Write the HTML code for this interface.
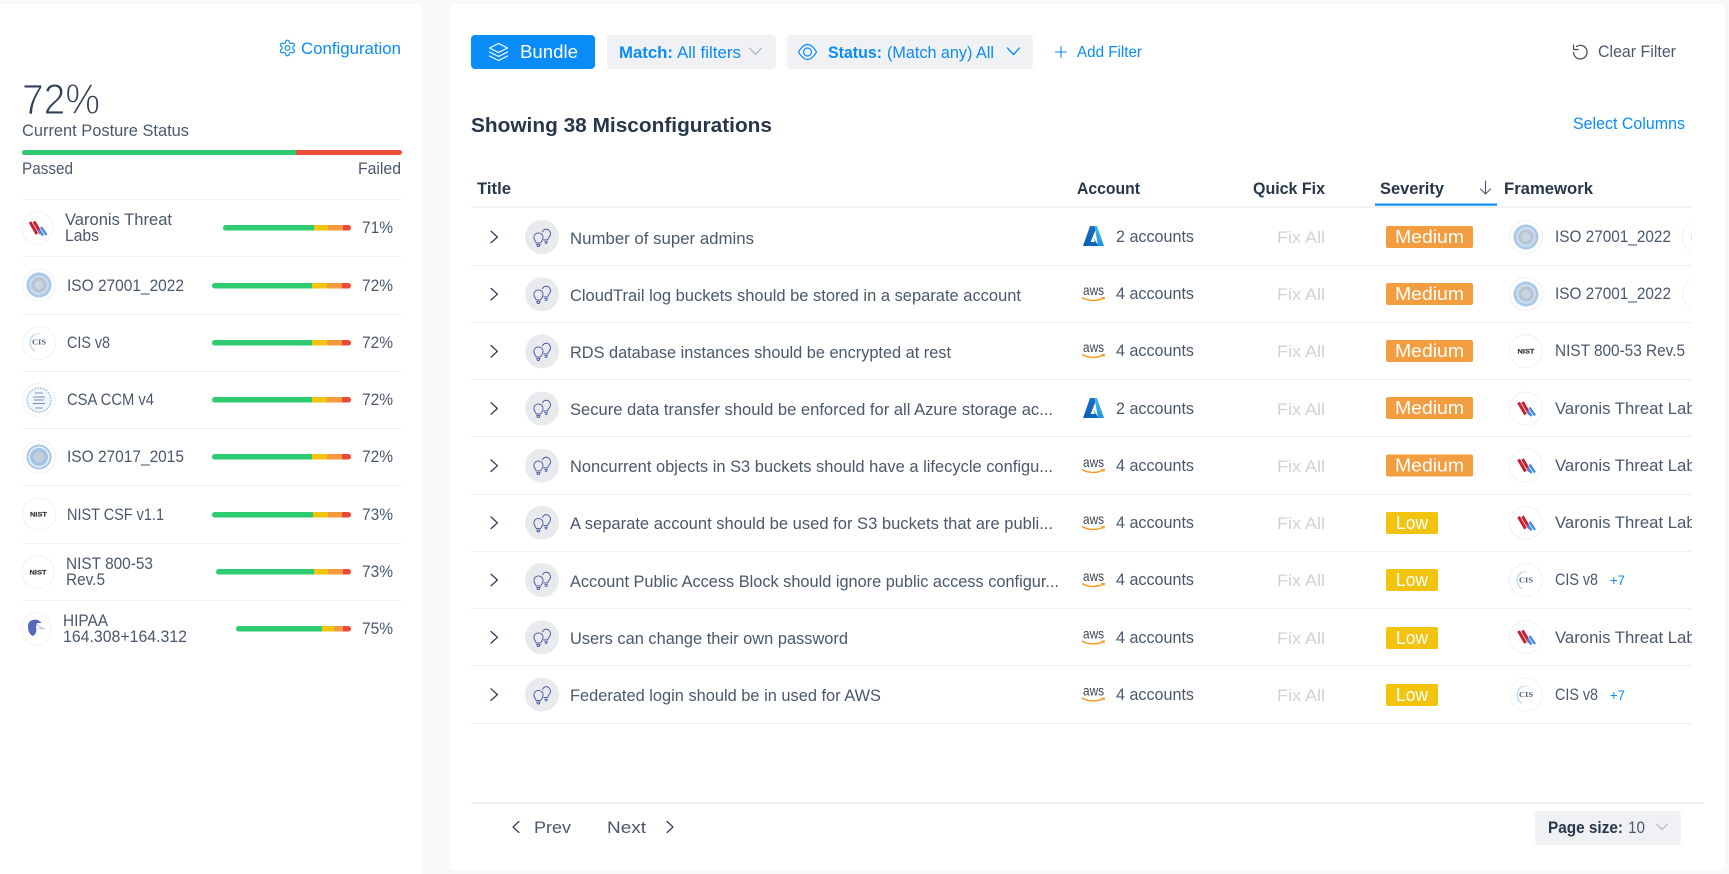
<!DOCTYPE html>
<html lang="en">
<head>
<meta charset="utf-8">
<title>Misconfigurations</title>
<style>
html,body{margin:0;padding:0;width:1729px;height:874px;overflow:hidden;background:#fafafa}
svg{display:block;font-family:"Liberation Sans",Arial,sans-serif}
.t{font-size:17px;fill:#4a586c}
.b{font-size:16.5px;fill:#27364a;font-weight:700}
.l{font-size:17px;fill:#0a8cf5}
.f{font-size:17px;fill:#cfd2d6}
.w{font-size:18px;fill:#fff}
.sep{stroke:#f0f0f2;stroke-width:1}
.c{fill:#fff;stroke:#f0f1f4;stroke-width:1}
.n{fill:none;stroke-linecap:round;stroke-linejoin:round}
</style>
</head>
<body>
<svg width="1729" height="874" viewBox="0 0 1729 874" xmlns="http://www.w3.org/2000/svg">
<defs>
<clipPath id="cl"><rect x="471" y="140" width="1221" height="600"/></clipPath>
<linearGradient id="az1" x1="0" y1="0" x2="0" y2="1"><stop offset="0" stop-color="#1a6fc4"/><stop offset="1" stop-color="#0a5fb4"/></linearGradient>
<linearGradient id="az2" x1="0" y1="0" x2="0" y2="1"><stop offset="0" stop-color="#3cc0f0"/><stop offset="1" stop-color="#2490dc"/></linearGradient>
<g id="var">
<path d="M-7.5-6-.5 6M-3.5-6.500 3.500 5.500" stroke="#c9202f" stroke-width="3" fill="none"/>
<path d="M3.500-1 9 7M1.500 2 5.500 7.500" stroke="#3f8ae6" stroke-width="2.400" fill="none"/>
</g>
<g id="iso">
<circle r="12.500" fill="#a9c8e8"/><circle r="10" fill="#c9daec"/><circle r="7.500" fill="#b5c5d6"/><circle r="4.500" fill="#cdd5de"/>
</g>
<g id="iso2">
<circle r="12.500" fill="#a5c6ea"/><circle r="10.500" fill="#e8f1fa"/><circle r="9" fill="#a4c3e4"/><circle r="5.500" fill="#c3cfdb"/>
</g>
<g id="csa">
<circle r="12" fill="#f0f5fa"/><circle r="12" fill="none" stroke="#9dbbe0" stroke-width="1.200" stroke-dasharray="2 1"/><path d="M-6-3H6M-5 0H5M-6 3.500H6" stroke="#6d8cc0" stroke-width="1"/><path d="M-4-7H4M-4 8H4" stroke="#8eaad4" stroke-width="1.200"/>
</g>
<g id="nist">
<text x="-8.500" y="2.500" font-size="6.500" font-weight="700" fill="#35393f" stroke="#35393f" stroke-width=".2" textLength="17" lengthAdjust="spacingAndGlyphs">NIST</text>
</g>
<g id="cis">
<path d="M-4-8A10 10 0 0 0-4 9" fill="none" stroke="#b9dcef" stroke-width="1.400"/><path d="M-7-4A9 9 0 0 1 1-8.500" fill="none" stroke="#d3e8f4" stroke-width="1.200"/>
<text x="-7" y="2.500" font-family="Liberation Serif,serif" font-size="7" font-weight="700" fill="#4d6272" textLength="14" lengthAdjust="spacingAndGlyphs">CIS</text>
</g>
<g id="hip">
<path d="M-9-2C-9-8-3-9 1-8L5-5 0-5-1-1C0 3-1 6-4 8-8 6-9 3-9-2Z" fill="#5568b8"/><path d="M0-3 7 1M1 0 8 1" stroke="#b6c0e0" stroke-width="1"/>
</g>
<g id="bulb" class="n" stroke="#3c4f9c" stroke-width="1" transform="scale(.88)">
<path d="M-1.600 5.600C-.6 3.600 1.200 2.600 1.200 -.6A5.200 5.200 0 0 0-9.200-.6C-9.200 2.400-7.200 3.600-6.600 5.600Z" fill="#e9eaed"/>
<path d="M-6 7.500H-2.200L-3.200 9.600H-5.200Z"/>
<path d="M.6-7C1.400-9 3.200-10 5-10A5.200 5.200 0 0 1 8.800-2C7.600-.4 7-.2 6.400 2.200H2M3 4.200H6L5.200 6H3.600"/>
</g>
<g id="chevR" class="n"><path d="M-3-5.800 3.400 0-3 5.800" stroke="#2f3e55" stroke-width="1.300"/></g>
<g id="aws">
<text x="-10.500" y="2" font-size="14" fill="#3a4450" textLength="21" lengthAdjust="spacingAndGlyphs">aws</text>
<path d="M-11.500 4.500C-5 8.300 4 8.300 10 5" fill="none" stroke="#f7981d" stroke-width="1.400"/><path d="M7.800 4.500 11 4.600 10.200 7" fill="none" stroke="#f7981d" stroke-width="1"/>
</g>
<g id="azure">
<path d="M-3.500-10H3.500L-4.500 10H-10.500Z" fill="url(#az1)"/>
<path d="M1-10H3.500L10.500 10H4.500Z" fill="url(#az2)"/>
<path d="M-.5 1 5 10H-8L-3 6H1.500Z" fill="#0a66bf"/>
</g>
</defs>

<!-- panels -->
<rect x="-4" y="3" width="428" height="875" rx="5" fill="#fff" stroke="#f3f3f4"/>
<rect x="448" y="3" width="1278" height="869" rx="5" fill="#fff" stroke="#f2f2f3"/>

<!-- left header -->
<g transform="translate(278.100 38.600) scale(.78)"><path class="n" stroke="#0a8cf5" stroke-width="1.500" d="M12.220 2h-.44a2 2 0 0 0-2 2v.18a2 2 0 0 1-1 1.730l-.43.25a2 2 0 0 1-2 0l-.15-.08a2 2 0 0 0-2.730.73l-.22.38a2 2 0 0 0 .73 2.730l.15.1a2 2 0 0 1 1 1.720v.51a2 2 0 0 1-1 1.740l-.15.09a2 2 0 0 0-.73 2.730l.22.38a2 2 0 0 0 2.730.73l.15-.08a2 2 0 0 1 2 0l.43.25a2 2 0 0 1 1 1.730V20a2 2 0 0 0 2 2h.44a2 2 0 0 0 2-2v-.18a2 2 0 0 1 1-1.730l.43-.25a2 2 0 0 1 2 0l.15.08a2 2 0 0 0 2.730-.73l.22-.39a2 2 0 0 0-.73-2.730l-.15-.08a2 2 0 0 1-1-1.740v-.5a2 2 0 0 1 1-1.740l.15-.09a2 2 0 0 0 .73-2.730l-.22-.38a2 2 0 0 0-2.730-.73l-.15.08a2 2 0 0 1-2 0l-.43-.25a2 2 0 0 1-1-1.730V4a2 2 0 0 0-2-2z"/><circle cx="12" cy="12" r="3" class="n" stroke="#0a8cf5" stroke-width="1.500"/></g>
<text class="l" x="301" y="54" textLength="100" lengthAdjust="spacingAndGlyphs">Configuration</text>
<text x="22" y="114" font-size="43" fill="#2f3e55" stroke="#fff" stroke-width="1.100" textLength="78" lengthAdjust="spacingAndGlyphs">72%</text>
<text class="t" x="22" y="136" textLength="167" lengthAdjust="spacingAndGlyphs">Current Posture Status</text>
<rect x="22" y="150" width="380" height="5" rx="2.500" fill="#e94f3b"/>
<path d="M24.500 150H296V155H24.500A2.500 2.500 0 0 1 24.500 150Z" fill="#2ecb71"/>
<text class="t" x="22" y="174" textLength="51" lengthAdjust="spacingAndGlyphs">Passed</text>
<text class="t" x="358" y="174" textLength="43" lengthAdjust="spacingAndGlyphs">Failed</text>

<!-- left list separators -->
<g class="sep">
<line x1="22" x2="401" y1="199.500" y2="199.500"/><line x1="22" x2="401" y1="256.500" y2="256.500"/><line x1="22" x2="401" y1="314.500" y2="314.500"/><line x1="22" x2="401" y1="371.500" y2="371.500"/><line x1="22" x2="401" y1="428.500" y2="428.500"/><line x1="22" x2="401" y1="485.500" y2="485.500"/><line x1="22" x2="401" y1="543.500" y2="543.500"/><line x1="22" x2="401" y1="600.500" y2="600.500"/>
</g>

<!-- list row 1 -->
<ellipse class="c" cx="37.500" cy="228" rx="15.500" ry="16.500"/><use href="#var" x="37.500" y="228"/>
<text class="t" x="65" y="225" textLength="107" lengthAdjust="spacingAndGlyphs">Varonis Threat</text>
<text class="t" x="65" y="241" textLength="34" lengthAdjust="spacingAndGlyphs">Labs</text>
<rect x="223" y="225" width="94" height="5.500" rx="2.700" fill="#2ecb71"/><rect x="340" y="225" width="11" height="5.500" rx="2.700" fill="#eb4a3a"/><rect x="314" y="225" width="14" height="5.500" fill="#f2c40f"/><rect x="328" y="225" width="15" height="5.500" fill="#f39a3e"/>
<text class="t" x="362" y="233" textLength="31" lengthAdjust="spacingAndGlyphs">71%</text>

<!-- list row 2 -->
<ellipse class="c" cx="39" cy="285" rx="16.500" ry="16"/><use href="#iso" x="39" y="285"/>
<text class="t" x="67" y="291" textLength="117" lengthAdjust="spacingAndGlyphs">ISO 27001_2022</text>
<rect x="212" y="283" width="103" height="5.500" rx="2.700" fill="#2ecb71"/><rect x="339" y="283" width="12" height="5.500" rx="2.700" fill="#eb4a3a"/><rect x="312" y="283" width="15" height="5.500" fill="#f2c40f"/><rect x="327" y="283" width="15" height="5.500" fill="#f39a3e"/>
<text class="t" x="362" y="291" textLength="31" lengthAdjust="spacingAndGlyphs">72%</text>

<!-- list row 3 -->
<ellipse class="c" cx="39" cy="343" rx="16.500" ry="16.500"/><use href="#cis" x="39" y="342"/>
<text class="t" x="67" y="348" textLength="43" lengthAdjust="spacingAndGlyphs">CIS v8</text>
<rect x="212" y="340" width="103" height="5.500" rx="2.700" fill="#2ecb71"/><rect x="339" y="340" width="12" height="5.500" rx="2.700" fill="#eb4a3a"/><rect x="312" y="340" width="15" height="5.500" fill="#f2c40f"/><rect x="327" y="340" width="15" height="5.500" fill="#f39a3e"/>
<text class="t" x="362" y="348" textLength="31" lengthAdjust="spacingAndGlyphs">72%</text>

<!-- list row 4 -->
<ellipse class="c" cx="39" cy="400" rx="16.500" ry="16.500"/><use href="#csa" x="39" y="400"/>
<text class="t" x="67" y="405" textLength="87" lengthAdjust="spacingAndGlyphs">CSA CCM v4</text>
<rect x="212" y="397" width="103" height="5.500" rx="2.700" fill="#2ecb71"/><rect x="339" y="397" width="12" height="5.500" rx="2.700" fill="#eb4a3a"/><rect x="312" y="397" width="15" height="5.500" fill="#f2c40f"/><rect x="327" y="397" width="15" height="5.500" fill="#f39a3e"/>
<text class="t" x="362" y="405" textLength="31" lengthAdjust="spacingAndGlyphs">72%</text>

<!-- list row 5 -->
<ellipse class="c" cx="39" cy="457" rx="16.500" ry="16.500"/><use href="#iso2" x="39" y="457"/>
<text class="t" x="67" y="462" textLength="117" lengthAdjust="spacingAndGlyphs">ISO 27017_2015</text>
<rect x="212" y="454" width="103" height="5.500" rx="2.700" fill="#2ecb71"/><rect x="339" y="454" width="12" height="5.500" rx="2.700" fill="#eb4a3a"/><rect x="312" y="454" width="15" height="5.500" fill="#f2c40f"/><rect x="327" y="454" width="15" height="5.500" fill="#f39a3e"/>
<text class="t" x="362" y="462" textLength="31" lengthAdjust="spacingAndGlyphs">72%</text>

<!-- list row 6 -->
<ellipse class="c" cx="39" cy="514" rx="16.500" ry="16"/><use href="#nist" x="38.500" y="514"/>
<text class="t" x="67" y="520" textLength="97" lengthAdjust="spacingAndGlyphs">NIST CSF v1.1</text>
<rect x="212" y="512" width="104" height="5.500" rx="2.700" fill="#2ecb71"/><rect x="339" y="512" width="12" height="5.500" rx="2.700" fill="#eb4a3a"/><rect x="313" y="512" width="15" height="5.500" fill="#f2c40f"/><rect x="328" y="512" width="14" height="5.500" fill="#f39a3e"/>
<text class="t" x="362" y="520" textLength="31" lengthAdjust="spacingAndGlyphs">73%</text>

<!-- list row 7 -->
<ellipse class="c" cx="38" cy="572" rx="16" ry="16.500"/><use href="#nist" x="38" y="572"/>
<text class="t" x="66" y="569" textLength="87" lengthAdjust="spacingAndGlyphs">NIST 800-53</text>
<text class="t" x="66" y="585" textLength="39" lengthAdjust="spacingAndGlyphs">Rev.5</text>
<rect x="216" y="569" width="101" height="5.500" rx="2.700" fill="#2ecb71"/><rect x="340" y="569" width="11" height="5.500" rx="2.700" fill="#eb4a3a"/><rect x="314" y="569" width="14" height="5.500" fill="#f2c40f"/><rect x="328" y="569" width="15" height="5.500" fill="#f39a3e"/>
<text class="t" x="362" y="577" textLength="31" lengthAdjust="spacingAndGlyphs">73%</text>

<!-- list row 8 -->
<ellipse class="c" cx="36.500" cy="629" rx="14.500" ry="16.500"/><use href="#hip" x="37" y="628"/>
<text class="t" x="63" y="626" textLength="45" lengthAdjust="spacingAndGlyphs">HIPAA</text>
<text class="t" x="63" y="642" textLength="124" lengthAdjust="spacingAndGlyphs">164.308+164.312</text>
<rect x="236" y="626" width="89" height="5.500" rx="2.700" fill="#2ecb71"/><rect x="340" y="626" width="11" height="5.500" rx="2.700" fill="#eb4a3a"/><rect x="322" y="626" width="12" height="5.500" fill="#f2c40f"/><rect x="334" y="626" width="9" height="5.500" fill="#f39a3e"/>
<text class="t" x="362" y="634" textLength="31" lengthAdjust="spacingAndGlyphs">75%</text>

<!-- toolbar -->
<rect x="471" y="35" width="124" height="34" rx="4" fill="#0a8cf8"/>
<g transform="translate(489 43)" class="n" stroke="#fff" stroke-width="1.200"><path d="M9.500 .5 18.500 5 9.500 9.500 .5 5Z"/><path d="M.5 9 9.500 13.500 18.500 9"/><path d="M.5 13 9.500 17.500 18.500 13"/></g>
<text x="520" y="58" font-size="18" fill="#fff" textLength="58" lengthAdjust="spacingAndGlyphs">Bundle</text>

<rect x="607" y="35" width="169" height="34" rx="4" fill="#f0f1f5"/>
<text x="619" y="58" font-size="17" font-weight="700" fill="#0a8cf5" textLength="54" lengthAdjust="spacingAndGlyphs">Match:</text>
<text class="l" x="677" y="58" textLength="64" lengthAdjust="spacingAndGlyphs">All filters</text>
<path class="n" d="M749.500 48 755.500 54.500 761.500 48" stroke="#a9b0ba" stroke-width="1.100"/>

<rect x="787" y="35" width="246" height="34" rx="4" fill="#f0f1f5"/>
<g class="n" stroke="#0a8cf5" stroke-width="1.200"><path d="M798.500 52C802 46 805 44.500 807.500 44.500S813 46 816.500 52C813 58 810 59.500 807.500 59.500S802 58 798.500 52Z"/><circle cx="807.500" cy="52" r="4"/></g>
<text x="828" y="58" font-size="17" font-weight="700" fill="#0a8cf5" textLength="54" lengthAdjust="spacingAndGlyphs">Status:</text>
<text class="l" x="887" y="58" textLength="107" lengthAdjust="spacingAndGlyphs">(Match any) All</text>
<path class="n" d="M1007.500 48 1013.500 54.500 1019.500 48" stroke="#0a8cf5" stroke-width="1.300"/>

<path class="n" d="M1061 46.500V57.500M1055.500 52H1066.500" stroke="#0a8cf5" stroke-width="1.100"/>
<text x="1077" y="57" font-size="15.500" fill="#0a8cf5" textLength="65" lengthAdjust="spacingAndGlyphs">Add Filter</text>

<g class="n" stroke="#3f4b5c" stroke-width="1.200"><path d="M1576.500 46.500A6.800 6.800 0 1 1 1573.500 52.500"/><path d="M1573.500 45V49.500H1578"/></g>
<text class="t" x="1598" y="57" textLength="78" lengthAdjust="spacingAndGlyphs">Clear Filter</text>

<text x="471" y="132" font-size="20" font-weight="700" fill="#27364a" textLength="301" lengthAdjust="spacingAndGlyphs">Showing 38 Misconfigurations</text>
<text class="l" x="1573" y="129" textLength="112" lengthAdjust="spacingAndGlyphs">Select Columns</text>

<!-- table header -->
<text class="b" x="477" y="194" textLength="34" lengthAdjust="spacingAndGlyphs">Title</text>
<text class="b" x="1077" y="194" textLength="63" lengthAdjust="spacingAndGlyphs">Account</text>
<text class="b" x="1253" y="194" textLength="72" lengthAdjust="spacingAndGlyphs">Quick Fix</text>
<text class="b" x="1380" y="194" textLength="64" lengthAdjust="spacingAndGlyphs">Severity</text>
<path class="n" d="M1485.500 181V194M1480.500 189 1485.500 194 1490.500 189" stroke="#4a586c" stroke-width="1.100"/>
<text class="b" x="1504" y="194" textLength="89" lengthAdjust="spacingAndGlyphs">Framework</text>
<rect x="471" y="206" width="1221" height="2" fill="#f2f2f4"/>
<rect x="1375" y="203.500" width="122" height="2.200" fill="#0a8cf5"/>

<g clip-path="url(#cl)">
<!-- separators -->
<g class="sep"><line x1="471" x2="1692" y1="265.500" y2="265.500"/><line x1="471" x2="1692" y1="322.500" y2="322.500"/><line x1="471" x2="1692" y1="379.500" y2="379.500"/><line x1="471" x2="1692" y1="436.500" y2="436.500"/><line x1="471" x2="1692" y1="494.500" y2="494.500"/><line x1="471" x2="1692" y1="551.500" y2="551.500"/><line x1="471" x2="1692" y1="608.500" y2="608.500"/><line x1="471" x2="1692" y1="665.500" y2="665.500"/><line x1="471" x2="1692" y1="723.500" y2="723.500"/></g>

<!-- row 1 -->
<use href="#chevR" x="494" y="237"/><circle cx="542" cy="237" r="17" fill="#e9eaed"/><use href="#bulb" x="542" y="238"/>
<text class="t" x="570" y="244" textLength="184" lengthAdjust="spacingAndGlyphs">Number of super admins</text>
<use href="#azure" x="1093.500" y="236"/><text class="t" x="1116" y="242" textLength="78" lengthAdjust="spacingAndGlyphs">2 accounts</text>
<text class="f" x="1277" y="243" textLength="48" lengthAdjust="spacingAndGlyphs">Fix All</text>
<rect x="1386" y="226" width="87" height="22" rx="2" fill="#f39d41"/><text class="w" x="1395" y="243" textLength="69" lengthAdjust="spacingAndGlyphs">Medium</text>
<circle class="c" cx="1526" cy="237" r="16.500"/><use href="#iso" x="1526" y="237"/>
<text class="t" x="1555" y="242" textLength="116" lengthAdjust="spacingAndGlyphs">ISO 27001_2022</text>
<circle class="c" cx="1699" cy="237" r="16.500"/><rect x="1691" y="234" width="1" height="7" fill="#dfe2e6"/>

<!-- row 2 -->
<use href="#chevR" x="494" y="294.200"/><circle cx="542" cy="294.200" r="17" fill="#e9eaed"/><use href="#bulb" x="542" y="295"/>
<text class="t" x="570" y="301" textLength="451" lengthAdjust="spacingAndGlyphs">CloudTrail log buckets should be stored in a separate account</text>
<use href="#aws" x="1093.500" y="293"/><text class="t" x="1116" y="299" textLength="78" lengthAdjust="spacingAndGlyphs">4 accounts</text>
<text class="f" x="1277" y="300" textLength="48" lengthAdjust="spacingAndGlyphs">Fix All</text>
<rect x="1386" y="283" width="87" height="22" rx="2" fill="#f39d41"/><text class="w" x="1395" y="300" textLength="69" lengthAdjust="spacingAndGlyphs">Medium</text>
<circle class="c" cx="1526" cy="294" r="16.500"/><use href="#iso" x="1526" y="294"/>
<text class="t" x="1555" y="299" textLength="116" lengthAdjust="spacingAndGlyphs">ISO 27001_2022</text>
<circle class="c" cx="1699" cy="294" r="16.500"/>

<!-- row 3 -->
<use href="#chevR" x="494" y="351.300"/><circle cx="542" cy="351.300" r="17" fill="#e9eaed"/><use href="#bulb" x="542" y="352"/>
<text class="t" x="570" y="358" textLength="381" lengthAdjust="spacingAndGlyphs">RDS database instances should be encrypted at rest</text>
<use href="#aws" x="1093.500" y="350"/><text class="t" x="1116" y="356" textLength="78" lengthAdjust="spacingAndGlyphs">4 accounts</text>
<text class="f" x="1277" y="357" textLength="48" lengthAdjust="spacingAndGlyphs">Fix All</text>
<rect x="1386" y="340" width="87" height="22" rx="2" fill="#f39d41"/><text class="w" x="1395" y="357" textLength="69" lengthAdjust="spacingAndGlyphs">Medium</text>
<circle class="c" cx="1526" cy="351" r="16.500"/><use href="#nist" x="1526" y="351"/>
<text class="t" x="1555" y="356" textLength="130" lengthAdjust="spacingAndGlyphs">NIST 800-53 Rev.5</text>

<!-- row 4 -->
<use href="#chevR" x="494" y="408.500"/><circle cx="542" cy="408.500" r="17" fill="#e9eaed"/><use href="#bulb" x="542" y="409"/>
<text class="t" x="570" y="415" textLength="483" lengthAdjust="spacingAndGlyphs">Secure data transfer should be enforced for all Azure storage ac...</text>
<use href="#azure" x="1093.500" y="408"/><text class="t" x="1116" y="414" textLength="78" lengthAdjust="spacingAndGlyphs">2 accounts</text>
<text class="f" x="1277" y="415" textLength="48" lengthAdjust="spacingAndGlyphs">Fix All</text>
<rect x="1386" y="397" width="87" height="22" rx="2" fill="#f39d41"/><text class="w" x="1395" y="414" textLength="69" lengthAdjust="spacingAndGlyphs">Medium</text>
<circle class="c" cx="1526" cy="408.500" r="16.500"/><use href="#var" x="1526" y="408.500"/>
<text class="t" x="1555" y="414" textLength="149" lengthAdjust="spacingAndGlyphs">Varonis Threat Labs</text>

<!-- row 5 -->
<use href="#chevR" x="494" y="465.700"/><circle cx="542" cy="465.700" r="17" fill="#e9eaed"/><use href="#bulb" x="542" y="466"/>
<text class="t" x="570" y="472" textLength="483" lengthAdjust="spacingAndGlyphs">Noncurrent objects in S3 buckets should have a lifecycle configu...</text>
<use href="#aws" x="1093.500" y="465"/><text class="t" x="1116" y="471" textLength="78" lengthAdjust="spacingAndGlyphs">4 accounts</text>
<text class="f" x="1277" y="472" textLength="48" lengthAdjust="spacingAndGlyphs">Fix All</text>
<rect x="1386" y="454.500" width="87" height="22" rx="2" fill="#f39d41"/><text class="w" x="1395" y="471.500" textLength="69" lengthAdjust="spacingAndGlyphs">Medium</text>
<circle class="c" cx="1526" cy="465.500" r="16.500"/><use href="#var" x="1526" y="465.500"/>
<text class="t" x="1555" y="471" textLength="149" lengthAdjust="spacingAndGlyphs">Varonis Threat Labs</text>

<!-- row 6 -->
<use href="#chevR" x="494" y="522.800"/><circle cx="542" cy="522.800" r="17" fill="#e9eaed"/><use href="#bulb" x="542" y="523.500"/>
<text class="t" x="570" y="529" textLength="483" lengthAdjust="spacingAndGlyphs">A separate account should be used for S3 buckets that are publi...</text>
<use href="#aws" x="1093.500" y="522"/><text class="t" x="1116" y="528" textLength="78" lengthAdjust="spacingAndGlyphs">4 accounts</text>
<text class="f" x="1277" y="529" textLength="48" lengthAdjust="spacingAndGlyphs">Fix All</text>
<rect x="1386" y="512" width="52" height="22" rx="2" fill="#f2c40f"/><text class="w" x="1396" y="529" textLength="32" lengthAdjust="spacingAndGlyphs">Low</text>
<circle class="c" cx="1526" cy="522.800" r="16.500"/><use href="#var" x="1526" y="522.800"/>
<text class="t" x="1555" y="528" textLength="149" lengthAdjust="spacingAndGlyphs">Varonis Threat Labs</text>

<!-- row 7 -->
<use href="#chevR" x="494" y="580"/><circle cx="542" cy="580" r="17" fill="#e9eaed"/><use href="#bulb" x="542" y="581"/>
<text class="t" x="570" y="587" textLength="489" lengthAdjust="spacingAndGlyphs">Account Public Access Block should ignore public access configur...</text>
<use href="#aws" x="1093.500" y="579"/><text class="t" x="1116" y="585" textLength="78" lengthAdjust="spacingAndGlyphs">4 accounts</text>
<text class="f" x="1277" y="586" textLength="48" lengthAdjust="spacingAndGlyphs">Fix All</text>
<rect x="1386" y="569" width="52" height="22" rx="2" fill="#f2c40f"/><text class="w" x="1396" y="586" textLength="32" lengthAdjust="spacingAndGlyphs">Low</text>
<circle class="c" cx="1526" cy="580" r="16.500"/><use href="#cis" x="1526" y="580"/>
<text class="t" x="1555" y="585" textLength="43" lengthAdjust="spacingAndGlyphs">CIS v8</text>
<text x="1610" y="585" font-size="14" fill="#0a8cf5" textLength="15" lengthAdjust="spacingAndGlyphs">+7</text>

<!-- row 8 -->
<use href="#chevR" x="494" y="637.300"/><circle cx="542" cy="637.300" r="17" fill="#e9eaed"/><use href="#bulb" x="542" y="638"/>
<text class="t" x="570" y="644" textLength="278" lengthAdjust="spacingAndGlyphs">Users can change their own password</text>
<use href="#aws" x="1093.500" y="636.500"/><text class="t" x="1116" y="643" textLength="78" lengthAdjust="spacingAndGlyphs">4 accounts</text>
<text class="f" x="1277" y="644" textLength="48" lengthAdjust="spacingAndGlyphs">Fix All</text>
<rect x="1386" y="627" width="52" height="22" rx="2" fill="#f2c40f"/><text class="w" x="1396" y="644" textLength="32" lengthAdjust="spacingAndGlyphs">Low</text>
<circle class="c" cx="1526" cy="637" r="16.500"/><use href="#var" x="1526" y="637"/>
<text class="t" x="1555" y="643" textLength="149" lengthAdjust="spacingAndGlyphs">Varonis Threat Labs</text>

<!-- row 9 -->
<use href="#chevR" x="494" y="694.600"/><circle cx="542" cy="694.600" r="17" fill="#e9eaed"/><use href="#bulb" x="542" y="695.500"/>
<text class="t" x="570" y="701" textLength="311" lengthAdjust="spacingAndGlyphs">Federated login should be in used for AWS</text>
<use href="#aws" x="1093.500" y="693.500"/><text class="t" x="1116" y="700" textLength="78" lengthAdjust="spacingAndGlyphs">4 accounts</text>
<text class="f" x="1277" y="701" textLength="48" lengthAdjust="spacingAndGlyphs">Fix All</text>
<rect x="1386" y="684" width="52" height="22" rx="2" fill="#f2c40f"/><text class="w" x="1396" y="701" textLength="32" lengthAdjust="spacingAndGlyphs">Low</text>
<circle class="c" cx="1526" cy="694.500" r="16.500"/><use href="#cis" x="1526" y="694.500"/>
<text class="t" x="1555" y="700" textLength="43" lengthAdjust="spacingAndGlyphs">CIS v8</text>
<text x="1610" y="700" font-size="14" fill="#0a8cf5" textLength="15" lengthAdjust="spacingAndGlyphs">+7</text>
</g>

<!-- footer -->
<rect x="471" y="802" width="1233" height="2" fill="#f0f0f4"/>
<path class="n" d="M519 821.500 513 827 519 832.500" stroke="#2f3e55" stroke-width="1.200"/>
<text class="t" x="534" y="833" textLength="37" lengthAdjust="spacingAndGlyphs">Prev</text>
<text class="t" x="607" y="833" textLength="39" lengthAdjust="spacingAndGlyphs">Next</text>
<path class="n" d="M667 821.500 673 827 667 832.500" stroke="#2f3e55" stroke-width="1.200"/>
<rect x="1535" y="811" width="146" height="34" rx="4" fill="#f0f1f5"/>
<text class="b" x="1548" y="833" textLength="75" lengthAdjust="spacingAndGlyphs">Page size:</text>
<text class="t" x="1628" y="833" textLength="17" lengthAdjust="spacingAndGlyphs">10</text>
<path class="n" d="M1656.500 824 1662 829.500 1667.500 824" stroke="#b0b6bf" stroke-width="1.100"/>
</svg>
</body>
</html>
